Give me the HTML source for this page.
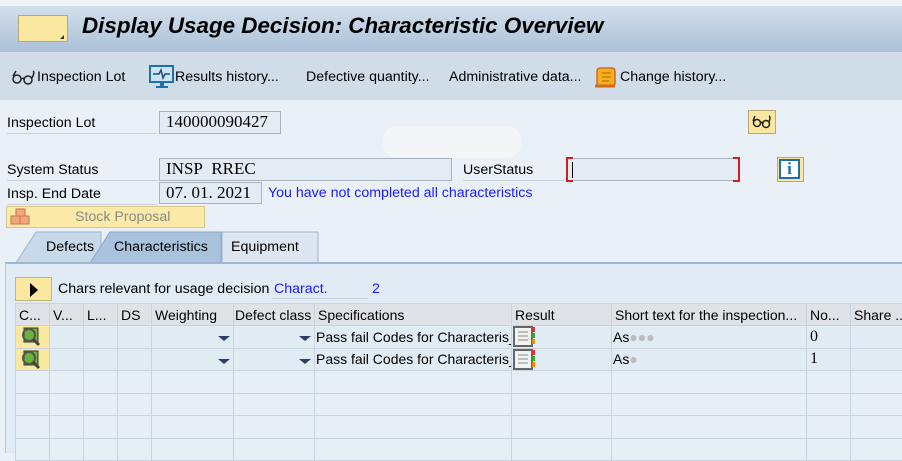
<!DOCTYPE html>
<html><head><meta charset="utf-8"><style>
*{box-sizing:border-box;margin:0;padding:0}
body{width:902px;height:453px;overflow:hidden;background:#e9f0f7;font-family:"Liberation Sans",Arial,sans-serif;font-size:14.2px;color:#000;position:relative}
.a{position:absolute;white-space:nowrap}
.fld{position:absolute;background:#e3ecf4;border:1px solid #a9b3bd;font-family:"Liberation Serif",serif;font-size:17px;padding-left:6px;line-height:20px}
.lbl{position:absolute;font-size:14.2px;border-bottom:1px solid #c9d2dc;line-height:20px}
table{border-collapse:collapse;position:absolute;left:15px;top:303px;table-layout:fixed;width:887px}
td{border:1px solid #c9d3dd;height:22.5px;line-height:20px;padding:0 3px;font-size:14px;white-space:nowrap;overflow:hidden;background:#e1ebf4;vertical-align:middle}
tr.h td{background:#dfe3e8;height:22px}
tr.e td{background:#e6eef6}
.dd{display:inline-block;width:0;height:0;border-left:6px solid transparent;border-right:6px solid transparent;border-top:5px solid #2c3e63;float:right;margin-top:4px}
svg{display:block}
</style></head><body>
<div class="a" style="left:0;top:0;width:902px;height:6px;background:#f1f3f8"></div>
<div class="a" style="left:0;top:6px;width:902px;height:46px;background:linear-gradient(#d3dfeb,#abc1d9)"></div>
<div class="a" style="left:18px;top:15px;width:50px;height:27px;background:#fbe8a0;border:1px solid #b7a876"></div>
<div class="a" style="left:60px;top:35px;width:0;height:0;border-left:4px solid transparent;border-bottom:4px solid #333"></div>
<div class="a" style="left:82px;top:13px;font-size:22.4px;font-weight:bold;font-style:italic">Display Usage Decision: Characteristic Overview</div>
<div class="a" style="left:0;top:52px;width:902px;height:48px;background:#d0dde9"></div>
<svg class="a" style="left:11px;top:68px" width="26" height="18" viewBox="0 0 26 18"><g fill="none" stroke="#222" stroke-width="1.5"><circle cx="6" cy="11" r="4"/><circle cx="17" cy="12" r="4"/><path d="M10 11q3-2 3 1M2 8L5 3M21 10q3-6 1-7"/></g></svg>
<div class="a" style="left:37px;top:69px">Inspection Lot</div>
<svg class="a" style="left:149px;top:65px" width="26" height="24"><rect x="1" y="1" width="23" height="16" fill="#cfe3f3" stroke="#1f6fa8" stroke-width="2"/><path d="M4 9h6l2-4 2 8 2-4h5" stroke="#1f4e79" fill="none" stroke-width="1.5"/><rect x="11" y="17" width="4" height="4" fill="#1f6fa8"/><rect x="7" y="21" width="12" height="2" fill="#1f6fa8"/></svg>
<div class="a" style="left:175px;top:69px">Results history...</div>
<div class="a" style="left:306px;top:69px">Defective quantity...</div>
<div class="a" style="left:449px;top:69px">Administrative data...</div>
<svg class="a" style="left:594px;top:66px" width="26" height="24"><rect x="3" y="2" width="18" height="18" rx="3" fill="#f3b21d" stroke="#d2691e" stroke-width="1.5"/><path d="M1 20h20" stroke="#d2691e" stroke-width="3"/><path d="M8 7h9M8 11h9M8 15h7" stroke="#c05a00"/></svg>
<div class="a" style="left:620px;top:69px">Change history...</div>

<div class="lbl" style="left:7px;top:113px;width:150px">Inspection Lot</div>
<div class="fld" style="left:159px;top:111px;width:122px;height:23px">140000090427</div>
<div class="a" style="left:748px;top:110px;width:28px;height:24px;background:#fbe8a0;border:1px solid #b7a876"></div>
<svg class="a" style="left:751px;top:114px" width="22" height="16"><g fill="none" stroke="#222" stroke-width="1.5"><circle cx="6" cy="9" r="3.5"/><circle cx="15" cy="10" r="3.5"/><path d="M9 9q3-2 3 1M2 7L4 2M18 8q2-5 0-6"/></g></svg>
<div class="a" style="left:383px;top:126px;width:138px;height:32px;background:#f4f5f6;border-radius:14px"></div>

<div class="lbl" style="left:7px;top:160px;width:150px">System Status</div>
<div class="fld" style="left:159px;top:158px;width:293px;height:23px">INSP&nbsp;&nbsp;RREC</div>
<div class="lbl" style="left:463px;top:160px;width:102px">UserStatus</div>
<div class="a" style="left:567px;top:158px;width:172px;height:23px;background:#e3ecf4;border:1px solid #a9b3bd"></div>
<div class="a" style="left:566px;top:157px;width:174px;height:25px;border:2px solid #d41f1f;clip-path:polygon(0 0,7px 0,7px 100%,0 100%,0 0,100% 0,100% 100%,calc(100% - 7px) 100%,calc(100% - 7px) 0)"></div>
<div class="a" style="left:572px;top:162px;width:1px;height:16px;background:#000"></div>
<div class="a" style="left:777px;top:157px;width:27px;height:25px;background:#fbe8a0;border:1px solid #b7a876"></div>
<div class="a" style="left:779px;top:159px;width:21px;height:20px;background:#fff;border:2px solid #1f6fa8;color:#1f6fa8;font-weight:bold;font-family:'Liberation Serif',serif;font-size:17px;text-align:center;line-height:16px">i</div>

<div class="lbl" style="left:7px;top:184px;width:150px">Insp. End Date</div>
<div class="fld" style="left:159px;top:182px;width:103px;height:22px">07. 01. 2021</div>
<div class="a" style="left:268px;top:185px;color:#1a1aff">You have not completed all characteristics</div>

<div class="a" style="left:6px;top:206px;width:199px;height:22px;background:#fbeaa8;border:1px solid #d6c88a"></div>
<svg class="a" style="left:9px;top:207px" width="24" height="20"><g fill="#f0a87a" stroke="#d07050"><rect x="7" y="2" width="9" height="7"/><rect x="2" y="9" width="9" height="8"/><rect x="11" y="9" width="9" height="8"/></g></svg>
<div class="a" style="left:75px;top:209px;color:#8a8a8a">Stock Proposal</div>

<svg class="a" style="left:0;top:230px" width="330" height="34">
<path d="M16 33L36 2H101V33Z" fill="#c8d9ea" stroke="#9fb4c9"/>
<path d="M222 33V2H318V33" fill="#dbe6f1" stroke="#9fb4c9"/>
<path d="M90 33L110 2H221V33Z" fill="#a9c3de" stroke="#8aa6c4"/>
</svg>
<div class="a" style="left:46px;top:239px">Defects</div>
<div class="a" style="left:114px;top:239px">Characteristics</div>
<div class="a" style="left:231px;top:239px">Equipment</div>
<div class="a" style="left:5px;top:262px;width:897px;height:191px;background:#e1ebf5;border-top:2px solid #9eb7d2;border-left:1px solid #b9c9d9"></div>

<div class="a" style="left:15px;top:277px;width:37px;height:24px;background:#fbe8a0;border:1px solid #c5b67d"></div>
<div class="a" style="left:30px;top:283px;width:0;height:0;border-top:7px solid transparent;border-bottom:7px solid transparent;border-left:8px solid #000"></div>
<div class="a" style="left:58px;top:281px">Chars relevant for usage decision</div>
<div class="a" style="left:274px;top:281px;color:#1a1aff">Charact.</div>
<div class="a" style="left:272px;top:298px;width:96px;height:1px;background:#c9d2dc"></div>
<div class="a" style="left:372px;top:281px;color:#1a1aff">2</div>

<table>
<colgroup><col style="width:34px"><col style="width:34px"><col style="width:34px"><col style="width:34px"><col style="width:82px"><col style="width:81px"><col style="width:197px"><col style="width:100px"><col style="width:195px"><col style="width:44px"><col style="width:52px"></colgroup>
<tr class="h"><td>C...</td><td>V...</td><td>L...</td><td>DS</td><td>Weighting</td><td style="padding:0 1px">Defect class</td><td>Specifications</td><td>Result</td><td>Short text for the inspection...</td><td>No...</td><td>Share ...</td></tr>
<tr><td style="background:#fbe8a0;padding:0"><svg width="32" height="21"><rect x="8" y="2" width="14" height="14" fill="#6bb33a" stroke="#333"/><circle cx="13" cy="9" r="6" fill="none" stroke="#555" stroke-width="2"/><path d="M17 13l6 6" stroke="#444" stroke-width="3"/></svg></td><td></td><td></td><td></td><td><span class="dd"></span></td><td><span class="dd"></span></td><td style="padding:0 1px">Pass fail Codes for Characteris_</td><td style="padding:0 0 0 1px"><svg width="22" height="21"><rect x="1" y="1" width="18" height="19" fill="#f2f2f2" stroke="#666" stroke-width="2"/><path d="M5 6h10M5 10h10M5 14h10" stroke="#888"/><rect x="19" y="1" width="3" height="5" fill="#d33"/><rect x="19" y="7" width="3" height="5" fill="#3a3"/><rect x="19" y="13" width="3" height="5" fill="#e80"/></svg></td><td style="padding:0 1px">As<span style="color:#bbb">&#9679;&#9679;&#9679;</span></td><td style="font-family:'Liberation Serif',serif;font-size:16px">0</td><td></td></tr>
<tr><td style="background:#fbe8a0;padding:0"><svg width="32" height="21"><rect x="8" y="2" width="14" height="14" fill="#6bb33a" stroke="#333"/><circle cx="13" cy="9" r="6" fill="none" stroke="#555" stroke-width="2"/><path d="M17 13l6 6" stroke="#444" stroke-width="3"/></svg></td><td></td><td></td><td></td><td><span class="dd"></span></td><td><span class="dd"></span></td><td style="padding:0 1px">Pass fail Codes for Characteris_</td><td style="padding:0 0 0 1px"><svg width="22" height="21"><rect x="1" y="1" width="18" height="19" fill="#f2f2f2" stroke="#666" stroke-width="2"/><path d="M5 6h10M5 10h10M5 14h10" stroke="#888"/><rect x="19" y="1" width="3" height="5" fill="#d33"/><rect x="19" y="7" width="3" height="5" fill="#3a3"/><rect x="19" y="13" width="3" height="5" fill="#e80"/></svg></td><td style="padding:0 1px">As<span style="color:#bbb">&#9679;</span></td><td style="font-family:'Liberation Serif',serif;font-size:16px">1</td><td></td></tr>
<tr class="e"><td></td><td></td><td></td><td></td><td></td><td></td><td></td><td></td><td></td><td></td><td></td></tr>
<tr class="e"><td></td><td></td><td></td><td></td><td></td><td></td><td></td><td></td><td></td><td></td><td></td></tr>
<tr class="e"><td></td><td></td><td></td><td></td><td></td><td></td><td></td><td></td><td></td><td></td><td></td></tr>
<tr class="e"><td></td><td></td><td></td><td></td><td></td><td></td><td></td><td></td><td></td><td></td><td></td></tr>
</table>
</body></html>
